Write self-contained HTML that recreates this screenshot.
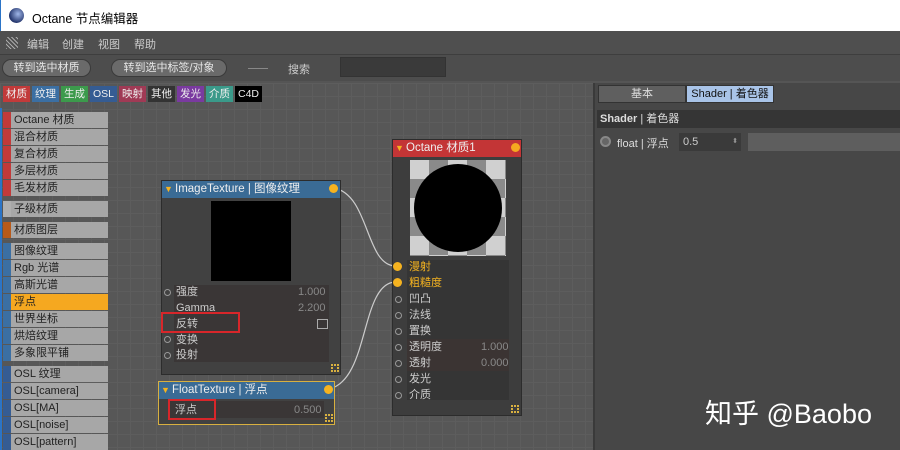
<!DOCTYPE html>
<html><head><meta charset="utf-8"><style>
*{margin:0;padding:0;box-sizing:border-box}
body{width:900px;height:450px;overflow:hidden;background:#555;font-family:"Liberation Sans","Noto Sans CJK SC",sans-serif;font-size:11px;color:#ddd;position:relative}
.a{position:absolute}
#title{left:0;top:0;width:900px;height:31px;background:#fff;color:#000;font-size:12.5px;border-left:1px solid #2b74c7}
#menu{left:0;top:31px;width:900px;height:24px;background:#4f4f4f;border-bottom:1px solid #3e3e3e}
#tool{left:0;top:55px;width:900px;height:26px;background:#4d4d4d}
.btn{height:18px;border-radius:9px;background:#6a6a6a;border:1px solid #3a3a3a;color:#e6e6e6;line-height:16px;text-align:center;font-size:11px}
#canvas{left:0;top:83px;width:593px;height:367px;background-color:#575757;background-image:linear-gradient(#5d5d5d 1px,transparent 1px),linear-gradient(90deg,#5d5d5d 1px,transparent 1px);background-size:13px 13px}
.tag{top:86px;height:16px;line-height:16px;color:#eee;padding:0 3px;font-size:10.5px}
.li{left:3px;width:105px;height:16px;background:#a7a7a7;color:#222;line-height:16px;padding-left:3px;font-size:11px;border-left:8px solid #c23a3a}
.node{background:#414141;border:1px solid #2c2c2c}
.hd{height:17px;line-height:17px;color:#eee;padding-left:13px;font-size:11.5px}
.row{height:15px;line-height:15px;font-size:11px;color:#ccc}
.dot{width:7px;height:7px;border-radius:50%;border:1.5px solid #999}
.gdot{width:9px;height:9px;border-radius:50%;background:#f5b320}
#right{left:593px;top:83px;width:307px;height:367px;background:#474747;border-left:2px solid #3a3a3a}
</style></head><body>
<div id="title" class="a"><div class="a" style="left:8px;top:8px;width:15px;height:15px;border-radius:50%;background:radial-gradient(circle at 60% 40%,#9fb6e8,#23346b 70%)"></div><span class="a" style="left:31px;top:8px">Octane 节点编辑器</span></div>
<div id="menu" class="a">
<div class="a" style="left:6px;top:6px;width:12px;height:12px;background:repeating-linear-gradient(45deg,#aaa 0 1px,#4f4f4f 1px 3px)"></div>
<span class="a" style="left:27px;top:5px;color:#ccc">编辑</span><span class="a" style="left:62px;top:5px;color:#ccc">创建</span><span class="a" style="left:98px;top:5px;color:#ccc">视图</span><span class="a" style="left:134px;top:5px;color:#ccc">帮助</span></div>
<div id="tool" class="a">
<div class="a btn" style="left:2px;top:4px;width:89px">转到选中材质</div>
<div class="a btn" style="left:111px;top:4px;width:116px">转到选中标签/对象</div>
<div class="a" style="left:248px;top:13px;width:20px;height:1px;background:#888"></div>
<span class="a" style="left:288px;top:6px;color:#ccc">搜索</span>
<div class="a" style="left:340px;top:2px;width:106px;height:20px;background:#3a3a3a;border:1px solid #333"></div></div>
<div id="canvas" class="a"></div>
<div class="a tag" style="left:3px;background:#c23a3a">材质</div>
<div class="a tag" style="left:32px;background:#3b6fa3">纹理</div>
<div class="a tag" style="left:61px;background:#3c9a4c">生成</div>
<div class="a tag" style="left:90px;background:#355c93">OSL</div>
<div class="a tag" style="left:119px;background:#a03a55">映射</div>
<div class="a tag" style="left:148px;background:#333">其他</div>
<div class="a tag" style="left:177px;background:#7a3aa0">发光</div>
<div class="a tag" style="left:206px;background:#3a9a8a">介质</div>
<div class="a tag" style="left:235px;background:#000">C4D</div>
<div class="a" style="left:0;top:108px;width:2px;height:342px;background:#2b74c7"></div>
<div class="a li" style="top:112px">Octane 材质</div>
<div class="a li" style="top:129px">混合材质</div>
<div class="a li" style="top:146px">复合材质</div>
<div class="a li" style="top:163px">多层材质</div>
<div class="a li" style="top:180px">毛发材质</div>
<div class="a li" style="top:201px;border-left-color:#b0b0b0">子级材质</div>
<div class="a li" style="top:222px;border-left-color:#b85a1a">材质图层</div>
<div class="a li" style="top:243px;border-left-color:#3b6fa3">图像纹理</div>
<div class="a li" style="top:260px;border-left-color:#3b6fa3">Rgb 光谱</div>
<div class="a li" style="top:277px;border-left-color:#3b6fa3">高斯光谱</div>
<div class="a li" style="top:294px;border-left-color:#3b6fa3;background:#f5a820">浮点</div>
<div class="a li" style="top:311px;border-left-color:#3b6fa3">世界坐标</div>
<div class="a li" style="top:328px;border-left-color:#3b6fa3">烘焙纹理</div>
<div class="a li" style="top:345px;border-left-color:#3b6fa3">多象限平铺</div>
<div class="a li" style="top:366px;border-left-color:#355c93">OSL 纹理</div>
<div class="a li" style="top:383px;border-left-color:#355c93">OSL[camera]</div>
<div class="a li" style="top:400px;border-left-color:#355c93">OSL[MA]</div>
<div class="a li" style="top:417px;border-left-color:#355c93">OSL[noise]</div>
<div class="a li" style="top:434px;border-left-color:#355c93">OSL[pattern]</div>

<svg class="a" style="left:0;top:0" width="600" height="450"><path d="M334 188 C370 195,365 266,396 266" stroke="#ccc" fill="none" stroke-width="1.2"/><path d="M329 389 C370 380,360 282,396 282" stroke="#ccc" fill="none" stroke-width="1.2"/></svg>

<div class="a node" style="left:161px;top:180px;width:180px;height:195px">
<div class="hd" style="background:#3a6b95;position:relative">ImageTexture | 图像纹理<span class="a" style="left:2px;top:0;color:#f5b320;font-size:9px">▼</span></div>
<div class="a" style="left:49px;top:20px;width:80px;height:80px;background:#000"></div>
<div class="a" style="left:12px;top:104px;width:155px;height:77px;background:#3a3636"></div>
<div class="a row" style="left:14px;top:104px">强度</div><div class="a row" style="left:136px;top:104px;color:#888">1.000</div>
<div class="a row" style="left:14px;top:120px">Gamma</div><div class="a row" style="left:136px;top:120px;color:#888">2.200</div>
<div class="a row" style="left:14px;top:136px">反转</div><div class="a" style="left:155px;top:138px;width:11px;height:10px;border:1px solid #aaa"></div>
<div class="a row" style="left:14px;top:152px">变换</div>
<div class="a row" style="left:14px;top:167px">投射</div>
<div class="a dot" style="left:2px;top:108px"></div><div class="a dot" style="left:2px;top:155px"></div><div class="a dot" style="left:2px;top:171px"></div>
<div class="a" style="left:169px;top:183px;width:8px;height:8px;border:2px dotted #d8b040"></div>
</div>
<div class="a gdot" style="left:329px;top:184px"></div>
<div class="a" style="left:161px;top:312px;width:79px;height:21px;border:2px solid #d8262a"></div>

<div class="a node" style="left:158px;top:381px;width:177px;height:44px;border:1px solid #d8b040">
<div class="hd" style="background:#3a6b95;position:relative">FloatTexture | 浮点<span class="a" style="left:2px;top:0;color:#f5b320;font-size:9px">▼</span></div>
<div class="a" style="left:10px;top:19px;width:155px;height:17px;background:#3a3636"></div>
<div class="a row" style="left:16px;top:21px">浮点</div><div class="a row" style="left:135px;top:21px;color:#888">0.500</div>
<div class="a" style="left:166px;top:32px;width:8px;height:8px;border:2px dotted #d8b040"></div>
</div>
<div class="a gdot" style="left:324px;top:385px"></div>
<div class="a" style="left:168px;top:399px;width:48px;height:21px;border:2px solid #d8262a"></div>

<div class="a node" style="left:392px;top:139px;width:130px;height:277px;background:#3d3d3d">
<div class="hd" style="background:#c33536;position:relative">Octane 材质1<span class="a" style="left:2px;top:0;color:#f5b320;font-size:9px">▼</span></div>
<div class="a" style="left:17px;top:20px;width:96px;height:96px;background:repeating-conic-gradient(#8a8a8a 0 25%,#d0d0d0 0 50%) 0 0/38px 38px"></div>
<div class="a" style="left:21px;top:24px;width:88px;height:88px;border-radius:50%;background:#000"></div>
<div class="a" style="left:14px;top:120px;width:102px;height:140px;background:#353535"></div>
<div class="a" style="left:14px;top:199px;width:102px;height:32px;background:#3b3433"></div>
<div class="a row" style="left:16px;top:120px;color:#f5b320">漫射</div>
<div class="a row" style="left:16px;top:136px;color:#f5b320">粗糙度</div>
<div class="a row" style="left:16px;top:152px">凹凸</div>
<div class="a row" style="left:16px;top:168px">法线</div>
<div class="a row" style="left:16px;top:184px">置换</div>
<div class="a row" style="left:16px;top:200px">透明度</div><div class="a row" style="left:88px;top:200px;color:#888">1.000</div>
<div class="a row" style="left:16px;top:216px">透射</div><div class="a row" style="left:88px;top:216px;color:#888">0.000</div>
<div class="a row" style="left:16px;top:232px">发光</div>
<div class="a row" style="left:16px;top:248px">介质</div>
<div class="a dot" style="left:2px;top:156px"></div><div class="a dot" style="left:2px;top:172px"></div><div class="a dot" style="left:2px;top:188px"></div><div class="a dot" style="left:2px;top:204px"></div><div class="a dot" style="left:2px;top:220px"></div><div class="a dot" style="left:2px;top:236px"></div><div class="a dot" style="left:2px;top:252px"></div>
<div class="a" style="left:118px;top:265px;width:8px;height:8px;border:2px dotted #d8b040"></div>
</div>
<div class="a gdot" style="left:393px;top:262px"></div><div class="a gdot" style="left:393px;top:278px"></div>
<div class="a" style="left:511px;top:143px;width:9px;height:9px;border-radius:50%;background:#f5a820"></div>

<div id="right" class="a">
<div class="a" style="left:3px;top:2px;width:88px;height:18px;background:#5f5f5f;border:1px solid #333;color:#ddd;text-align:center;line-height:16px">基本</div>
<div class="a" style="left:91px;top:2px;width:88px;height:18px;background:#a9c4e8;border:1px solid #333;color:#111;text-align:center;line-height:16px">Shader | 着色器</div>
<div class="a" style="left:2px;top:27px;width:305px;height:18px;background:#353535;color:#ddd;font-weight:bold;line-height:18px;padding-left:3px">Shader <span style="font-weight:normal">| 着色器</span></div>
<div class="a" style="left:5px;top:53px;width:11px;height:11px;border-radius:50%;border:2px solid #888;background:#666"></div>
<span class="a" style="left:22px;top:52px;color:#ddd">float | 浮点</span>
<div class="a" style="left:84px;top:50px;width:62px;height:18px;background:#3a3a3a;color:#ccc;line-height:18px;padding-left:4px">0.5<span class="a" style="right:3px;top:0;font-size:7px;color:#999">⬍</span></div>
<div class="a" style="left:153px;top:50px;width:154px;height:18px;background:#5e5e5e"></div>
</div>
<div class="a" style="left:705px;top:392px;color:#fff;font-size:27px">知乎 @Baobo</div>
</body></html>
